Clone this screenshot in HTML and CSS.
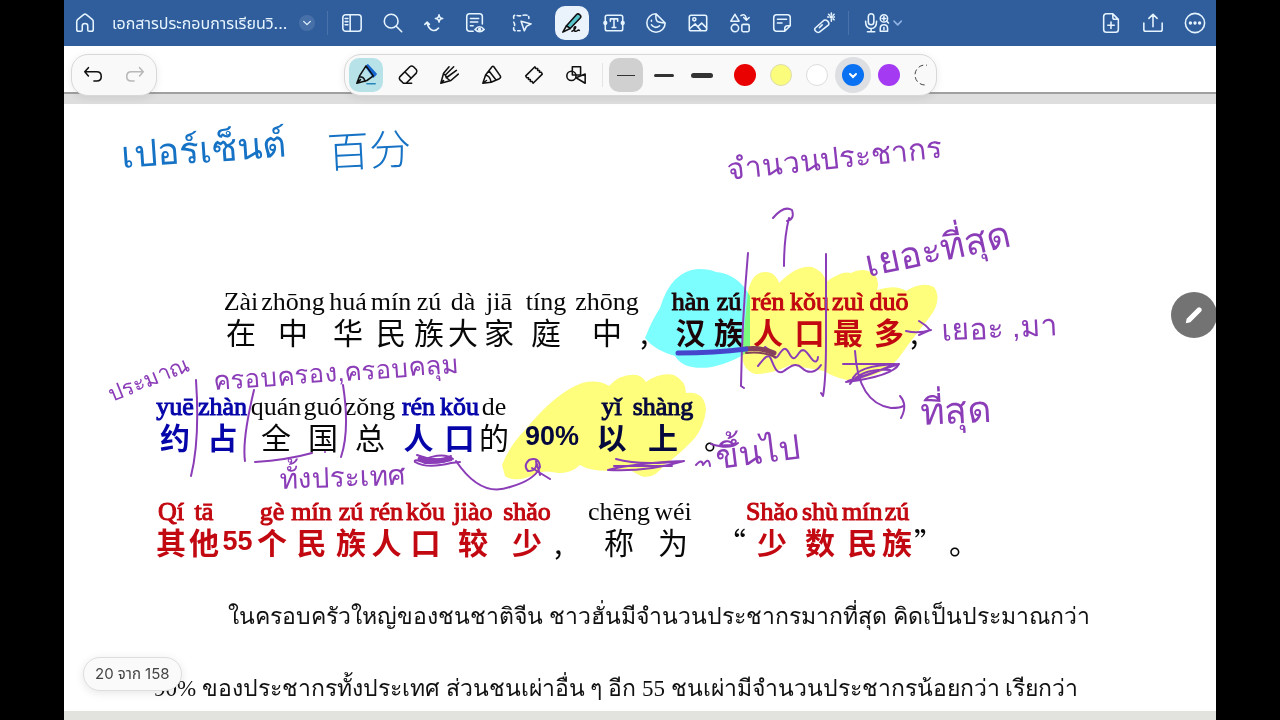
FILE: index.html
```html
<!DOCTYPE html>
<html lang="th">
<head>
<meta charset="utf-8">
<meta name="viewport" content="width=device-width, initial-scale=1">
<title>เอกสารประกอบการเรียน</title>
<link rel="stylesheet" href="styles.css">
</head>
<body>
<div class="app">
  <header class="topbar">
    <button class="tool home" aria-label="Home"><svg class="icon" viewBox="0 0 24 24"><path d="M3 10.5Q3 9 4.2 8L10.500 2.800Q12 1.800 13.500 2.800L19.800 8Q21 9 21 10.500V19Q21 21 19 21H16.500Q15 21 15 19.500V15Q15 12.500 12 12.500T9 15V19.500Q9 21 7.500 21H5Q3 21 3 19Z"/></svg></button>
    <h1 class="title">เอกสารประกอบการเรียนวิ...</h1>
    <button class="title-menu" aria-label="Document menu"><svg class="icon small" viewBox="0 0 24 24"><path d="M4 8l8 8 8-8"/></svg></button>
    <span class="divider"></span>
    <nav class="tools views">
      <button class="tool" aria-label="Sidebar"><svg class="icon" viewBox="0 0 24 24"><rect x="2" y="3" width="20" height="18" rx="3"/><path d="M10 3v18M4.500 7h3M4.500 10.500h3M4.500 14h3"/></svg></button>
      <button class="tool" aria-label="Search"><svg class="icon" viewBox="0 0 24 24"><circle cx="10" cy="10" r="7.500"/><path d="M15.500 15.500l6 6"/></svg></button>
      <button class="tool" aria-label="Assistant"><svg class="icon" viewBox="0 0 24 24"><path d="M2 13.500l2.500-2.500L7 13.500M4.500 12c2 9 9 10 12.500 5.500M17.500 3q.5 4 4 4-3.500 0-4 4-.5-4-4-4 3.500 0 4-4z"/></svg></button>
      <button class="tool" aria-label="Page view"><svg class="icon" viewBox="0 0 24 24"><path d="M10 21H6q-3 0-3-3V5q0-3 3-3h11q3 0 3 3v8M7 7h9M7 11h8M7 15h3"/><path d="M12 19q5-6 10 0-5 5-10 0z"/><circle cx="17" cy="19" r="1"/></svg></button>
    </nav>
    <button class="tool lasso" aria-label="Lasso"><svg class="icon" viewBox="0 0 24 24"><path d="M3 7Q2 3 6 3.500q3 1.500 7 0 7-1 6.500 3.500M3 11q2 3 0 6-1 4 4 3.500h3" stroke-dasharray="4 2.500"/><path d="M11 10l11 3-5 2.500-2.500 5z"/></svg></button>
    <nav class="tools inserts">
      <button class="tool active" aria-label="Pen"><svg class="icon pen" viewBox="0 0 24 24"><path class="aqua" d="M6 15L17 2.800q1.500-1.500 3.500.2t.500 3.500L10 18z"/><path d="M2 22l4-7L10 18zM12 21c3-1 5-5 3.500-5s-2 5 .500 5 2-2 4-1"/></svg></button>
      <button class="tool" aria-label="Text box"><svg class="icon" viewBox="0 0 24 24"><rect x="2.500" y="3.500" width="19" height="17" rx="2"/><path d="M8 10V7.500h8V10M12 7.500V17M10 17h4"/><circle class="solid" cx="2.500" cy="12" r="1.500"/><circle class="solid" cx="21.500" cy="12" r="1.500"/></svg></button>
      <button class="tool" aria-label="Sticker"><svg class="icon" viewBox="0 0 24 24"><path d="M12 2a10 10 0 1 0 10 10zM12 2q-1 8 3 9t7 1M7 14q4 5 9 1M7 9v1"/></svg></button>
      <button class="tool" aria-label="Image"><svg class="icon" viewBox="0 0 24 24"><rect x="2.500" y="3.500" width="19" height="17" rx="2"/><circle cx="8" cy="8" r="1.700"/><path d="M3 18l6-5 6 7M12 16l4-4 5 5"/></svg></button>
      <button class="tool" aria-label="Elements"><svg class="icon" viewBox="0 0 24 24"><path d="M6.500 2.500L11 10H2zM13 4q5-3 6 4M16 6l3 3 3-3"/><circle cx="6.500" cy="17.500" r="4"/><rect x="14" y="13.500" width="8" height="8" rx="1.500"/></svg></button>
      <button class="tool" aria-label="Sticky note"><svg class="icon" viewBox="0 0 24 24"><path d="M15 21H6q-3 0-3-3V6q0-3 3-3h12q3 0 3 3v9zM15 21v-3q0-3 3-3h3M7 8h10M7 12h5"/></svg></button>
      <button class="tool" aria-label="Laser pointer"><svg class="icon" viewBox="0 0 24 24"><path d="M2.500 17.500L12 9q2-1 4 1t1 4L7 22q-2 1-4-1t-.5-3.500zM7 17l3-3M20 1v2M20 8v2M16 5.500h1.500M22.500 5.500H24M17 2.500l1 1M22 7.500l1 1M22 3.500l1-1"/><circle class="solid" cx="20" cy="5.500" r="1"/></svg></button>
    </nav>
    <span class="divider"></span>
    <button class="record" aria-label="Record audio"><svg class="icon wide" viewBox="0 0 40 24"><rect x="4" y="2" width="6" height="12" rx="3"/><path d="M1 10q0 8 6 8t6-8M7 18v3M3 21.500h8"/><circle cx="21" cy="7" r="4"/><path d="M19 7h4M21 5v4M24 10l2 2M17 21v-3q0-4 4-4t4 4v3zM21 17v2"/><path class="faint" d="M32 10l4 4 4-4"/></svg></button>
    <nav class="tools actions">
      <button class="tool" aria-label="Add page"><svg class="icon" viewBox="0 0 24 24"><path d="M14 2H7Q4 2 4 5v14q0 3 3 3h10q3 0 3-3V8zM14 2v4q0 2 2 2h4M12 11v7M8.500 14.500h7"/></svg></button>
      <button class="tool" aria-label="Share"><svg class="icon" viewBox="0 0 24 24"><path d="M12 16V3M7.500 7L12 2.500 16.500 7M2 12v7q0 2 2 2h16q2 0 2-2v-7"/></svg></button>
      <button class="tool" aria-label="More"><svg class="icon" viewBox="0 0 24 24"><circle cx="12" cy="12" r="10.500"/><circle class="solid" cx="7" cy="12" r="1"/><circle class="solid" cx="12" cy="12" r="1"/><circle class="solid" cx="17" cy="12" r="1"/></svg></button>
    </nav>
  </header>

  <div class="penbar">
    <div class="pill history">
      <button class="tool" aria-label="Undo"><svg class="icon" viewBox="0 0 24 24"><path d="M7 4L3 8.500 7 13M3 8.500h13q5 0 5 5t-5 5h-3"/></svg></button>
      <button class="tool" aria-label="Redo" disabled><svg class="icon" viewBox="0 0 24 24"><path d="M17 4l4 4.500-4 4.500M21 8.500H8q-5 0-5 5t5 5h3"/></svg></button>
    </div>
    <div class="pill pens">
      <button class="tool chosen" aria-label="Fountain pen"><svg class="icon" viewBox="0 0 24 24"><path class="blue" d="M12 3l2-2 9 10-3 3z"/><path d="M2 21L5 13l7-11 8 11-7 5-11 3zM2 21l4-4M5 14q5 0 6 5"/><path class="blue-line" d="M13 21.500h9"/></svg></button>
      <button class="tool" aria-label="Eraser"><svg class="icon" viewBox="0 0 24 24"><path d="M3 14L14 3q2-1.500 4 0l3 3q1.500 2 0 4L10 21H7l-4-4q-1-1.500 0-3zM8.500 8.500l7 7M10 21h6"/></svg></button>
      <button class="tool" aria-label="Pencil"><svg class="icon" viewBox="0 0 24 24"><path d="M2 21l3-11 6-7M2 21l11-3 8-7M5 11l2 1 1 3 4 3M7 12l9-9M8 15l11-8M2 21l3-3"/></svg></button>
      <button class="tool" aria-label="Highlighter"><svg class="icon" viewBox="0 0 24 24"><path d="M2 21l3-9 7-9q1-1 2 0l7 10q1 2-1 3l-9 4zM5 12q5 1 6 8M9 8l7 9M2 21l4-3"/></svg></button>
      <button class="tool" aria-label="Tape"><svg class="icon" viewBox="0 0 24 24"><path d="M3 13L13 3l1 2 2 0 0 2 2 0 0 2 2 0 1 2-10 10-1-2-2 0 0-2-2 0 0-2-2 0z"/></svg></button>
      <button class="tool" aria-label="Shapes"><svg class="icon" viewBox="0 0 24 24"><rect x="8" y="3" width="9" height="9"/><circle cx="7" cy="13" r="5"/><path d="M12 15l10-4v10z"/></svg></button>
      <span class="divider dark"></span>
      <button class="width picked" aria-label="Thin"><span class="bar thin"></span></button>
      <button class="width" aria-label="Medium"><span class="bar medium"></span></button>
      <button class="width" aria-label="Thick"><span class="bar thick"></span></button>
      <div class="swatches">
        <button class="swatch" aria-label="Red"><span class="dot red"></span></button>
        <button class="swatch" aria-label="Yellow"><span class="dot yellow"></span></button>
        <button class="swatch" aria-label="White"><span class="dot white"></span></button>
        <button class="swatch current" aria-label="Blue"><span class="dot azure"><svg class="tick" viewBox="0 0 22 22"><path d="M8 10l3 3 3-3"/></svg></span></button>
        <button class="swatch" aria-label="Purple"><span class="dot purple"></span></button>
        <button class="swatch cut" aria-label="Add colour"><svg class="ring" viewBox="0 0 22 22"><circle cx="11" cy="11" r="10"/></svg></button>
      </div>
    </div>
  </div>

  <main class="paper">
    <svg class="layer" viewBox="64 104 1152 607" preserveAspectRatio="xMidYMin slice" aria-hidden="true">
      <path class="mark cyan" d="M645 338Q652 320 660 308Q671 271 698 269Q710 269 716 272Q738 274 750 296V350Q735 362 712 367Q684 371 675 356Q654 350 645 338Z"/>
      <path class="mark lemon" d="M748 292Q752 271 767 272Q776 273 779 283Q797 265 812 267Q824 271 826 282Q842 270 851 273Q864 266 875 275Q880 282 877 290Q896 284 906 291Q922 281 934 287Q943 300 929 318Q913 338 903 352Q887 378 847 380Q833 377 824 371L790 365Q773 374 755 374Q741 370 742 350Z"/>
      <path class="mark lemon" d="M502 465Q510 445 525 430Q555 393 582 383Q598 379 609 386Q621 373 637 375Q643 377 646 382Q660 372 674 375Q686 381 686 393Q705 391 706 410Q704 427 694 439Q678 456 664 465Q654 480 641 476Q633 472 629 469Q594 474 580 465Q570 474 558 473Q545 470 537 473Q517 484 505 476Z"/>
    </svg>

    <article class="lesson">
      <div class="line one">
        <span class="word"><i>Zài</i><b>在</b></span><span class="word"><i>zhōng</i><b>中</b></span><span class="word"><i>huá</i><b>华</b></span><span class="word"><i>mín</i><b>民</b></span><span class="word"><i>zú</i><b>族</b></span><span class="word"><i>dà</i><b>大</b></span><span class="word"><i>jiā</i><b>家</b></span><span class="word"><i>tíng</i><b>庭</b></span><span class="word"><i>zhōng</i><b>中</b></span><span class="word comma"><i></i><b>,</b></span><span class="word strong dark"><i>hàn</i><b>汉</b></span><span class="word strong dark"><i>zú</i><b>族</b></span><span class="word strong crimson"><i>rén</i><b>人</b></span><span class="word strong crimson"><i>kǒu</i><b>口</b></span><span class="word strong crimson"><i>zuì</i><b>最</b></span><span class="word strong crimson"><i>duō</i><b>多</b></span><span class="word comma"><i></i><b>,</b></span>
      </div>
      <div class="line two">
        <span class="word strong navy"><i>yuē</i><b>约</b></span><span class="word strong navy"><i>zhàn</i><b>占</b></span><span class="word"><i>quán</i><b>全</b></span><span class="word"><i>guó</i><b>国</b></span><span class="word"><i>zǒng</i><b>总</b></span><span class="word strong navy"><i>rén</i><b>人</b></span><span class="word strong navy"><i>kǒu</i><b>口</b></span><span class="word"><i>de</i><b>的</b></span><span class="word strong ink"><i></i><b class="figure">90%</b></span><span class="word strong ink"><i>yǐ</i><b>以</b></span><span class="word strong ink"><i>shàng</i><b>上</b></span><span class="word"><i></i><b>。</b></span>
      </div>
      <div class="line three">
        <span class="word strong crimson"><i>Qí</i><b>其</b></span><span class="word strong crimson"><i>tā</i><b>他</b></span><span class="word strong crimson"><i></i><b class="figure">55</b></span><span class="word strong crimson"><i>gè</i><b>个</b></span><span class="word strong crimson"><i>mín</i><b>民</b></span><span class="word strong crimson"><i>zú</i><b>族</b></span><span class="word strong crimson"><i>rén</i><b>人</b></span><span class="word strong crimson"><i>kǒu</i><b>口</b></span><span class="word strong crimson"><i>jiào</i><b>较</b></span><span class="word strong crimson"><i>shǎo</i><b>少</b></span><span class="word comma"><i></i><b>,</b></span><span class="word"><i>chēng</i><b>称</b></span><span class="word"><i>wéi</i><b>为</b></span><span class="word quote"><i></i><b>“</b></span><span class="word strong crimson"><i>Shǎo</i><b>少</b></span><span class="word strong crimson"><i>shù</i><b>数</b></span><span class="word strong crimson"><i>mín</i><b>民</b></span><span class="word strong crimson"><i>zú</i><b>族</b></span><span class="word"><i></i><b>”</b></span><span class="word"><i></i><b>。</b></span>
      </div>
      <p class="thai">ในครอบครัวใหญ่ของชนชาติจีน ชาวฮั่นมีจำนวนประชากรมากที่สุด คิดเป็นประมาณกว่า<br>90% ของประชากรทั้งประเทศ ส่วนชนเผ่าอื่น ๆ อีก 55 ชนเผ่ามีจำนวนประชากรน้อยกว่า เรียกว่า</p>
    </article>

    <svg class="layer" viewBox="64 104 1152 607" preserveAspectRatio="xMidYMin slice">
      <g class="note blue-ink">
        <text class="n37" transform="translate(122 168) rotate(-4)">เปอร์เซ็นต์</text>
        <text class="n42" transform="translate(328 168) rotate(-3)">百分</text>
      </g>
      <g class="note">
        <text class="n30" transform="translate(728 180) rotate(-6)">จำนวนประชากร</text>
        <text class="n37" transform="translate(868 277) rotate(-12)">เยอะที่สุด</text>
        <text class="n22" transform="translate(112 402) rotate(-22)">ประมาณ</text>
        <text class="n26" transform="translate(214 390) rotate(-4)">ครอบครอง,ครอบคลุม</text>
        <text class="n28" transform="translate(280 489) rotate(-2)">ทั้งประเทศ</text>
        <text class="n34" transform="translate(717 469) rotate(-7)">ขึ้นไป</text>
        <text class="n37" transform="translate(921 425) rotate(-3)">ที่สุด</text>
        <text class="n30" transform="translate(942 341) rotate(-3)">เยอะ ,มา</text>
      </g>
      <g class="stroke">
        <path d="M784 266Q784 238 789 218M773 218Q784 205 792 210Q795 219 787 221"/>
        <path d="M748 253Q742 320 741 386L744 388M826 254V340Q826 380 823 396L821 393"/>
        <path d="M196 380Q200 440 191 476M254 390Q242 440 245 461M343 385Q350 430 341 457M255 462Q287 460 312 453M325 452V452"/>
        <path d="M765 347C771 350 774 362 778 356S785 345 789 353S795 359 799 353S806 351 811 358S818 360 818 357"/>
        <path d="M758 366C763 360 768 352 771 359S777 376 784 371S796 362 802 368S816 373 821 365"/>
        <path d="M855 351Q858 403 891 408Q901 408 903 406M900 396Q908 405 901 418M843 364H895Q870 375 846 382Q893 376 899 364Q855 365 852 381M850 384Q861 368 890 370M848 381L896 365"/>
        <path d="M906 331Q918 334 931 330M919 321Q926 325 930 330L919 335"/>
        <path d="M417 455Q438 463 451 456Q450 464 425 463Q413 458 415 462Q427 469 451 463L460 462M420 461Q443 451 453 459"/>
        <path d="M456 461Q481 498 510 487Q535 480 540 467Q539 456 529 460Q523 466 528 471Q538 471 536 461L540 475M532 468L550 479"/>
        <path d="M616 459Q640 466 684 461Q647 472 608 470Q635 463 684 461M614 466H672"/>
        <path d="M696 465Q702 458 703 465Q709 456 710 466M711 444Q730 450 738 443"/>
        <path class="heavy" d="M420 459Q438 463 450 459"/>
        <path class="heavy maroon" d="M746 349Q760 347 774 353"/>
        <path class="heavy indigo" d="M678 353Q715 353 746 349"/>
        <path class="maroon" d="M746 353Q762 351 775 357"/>
      </g>
    </svg>

    <div class="page-chip">20 จาก 158</div>
    <button class="float-pen" aria-label="Edit"><svg class="icon" viewBox="0 0 24 24"><path d="M3 21l1-5L16 4q2-1 3 0l1 1q1 1 0 3L8 20z"/></svg></button>
  </main>
  <div class="page-edge"></div>
</div>
</body>
</html>
```
FILE: styles.css
```css
* { box-sizing: border-box; }

body {
  margin: 0;
  background: #000;
  font-family: Inter, "Noto Sans", "Noto Sans Thai", "Liberation Sans", sans-serif;
}

button {
  display: flex;
  align-items: center;
  justify-content: center;
  flex: none;
  margin: 0;
  padding: 0;
  border: 0;
  background: none;
  color: inherit;
  font: inherit;
}

.app {
  display: flex;
  flex-direction: column;
  height: 100vh;
  margin: 0 5%;
  overflow: hidden;
  background: #fff;
}

.topbar {
  display: flex;
  align-items: center;
  flex: none;
  height: 46px;
  background: #305e9c;
  color: #e6f4ff;
}

.icon {
  width: 22px;
  height: 22px;
  fill: none;
  stroke: currentColor;
  stroke-width: 1.7;
  stroke-linecap: round;
  stroke-linejoin: round;
}
.icon .solid { fill: currentColor; }
.icon .faint { stroke: #8fb4e4; }
.icon.small { width: 10px; height: 10px; stroke-width: 3; }
.icon.wide { width: 40px; height: 22px; }

.tool { width: 42px; height: 34px; }
.tools { display: flex; }
.title {
  width: 180px;
  margin: 0 0 0 6px;
  overflow: hidden;
  font-size: 16px;
  font-weight: 400;
  line-height: 28px;
  white-space: nowrap;
}
.title-menu {
  width: 16px;
  height: 16px;
  margin-left: 7px;
  border-radius: 50%;
  background: #4870a8;
}
.divider { flex: none; width: 1px; height: 24px; margin: 0 3px 0 12px; background: #4a72aa; }
.divider.dark { margin: 0 6px 0 5px; background: #e4e4e4; }
.views .tool { width: 41px; }
.lasso { margin-left: 6px; }
.inserts { margin-left: 8px; }
.inserts + .divider { margin: 0 14px 0 3px; }
.tool.active { width: 34px; margin: 0 4px; border-radius: 10px; background: #eaf3fc; color: #111; }
.aqua { fill: #58c4cc; }
.actions { margin-left: auto; }

.penbar {
  position: relative;
  z-index: 2;
  display: grid;
  grid-template-columns: 1fr auto 1fr;
  align-items: start;
  flex: none;
  height: 48px;
  padding: 8px 7px 0;
  border-bottom: 2px solid #a0a0a0;
}
.pill {
  display: flex;
  align-items: center;
  justify-self: start;
  height: 42px;
  border: 1px solid #d8d8d8;
  border-radius: 17px;
  background: #f9f9f9;
  box-shadow: 0 2px 8px #00000014;
  color: #111;
}
.history { width: 86px; }
.history .tool:disabled { color: #b8b8b8; }
.pens .tool.chosen { width: 34px; margin: 0 4px; border-radius: 10px; background: #b6e2e8; }
.icon .blue { fill: #1767d2; stroke: #1767d2; }
.icon .blue-line { stroke: #2685bd; }
.width { width: 34px; height: 34px; margin-right: 4px; border-radius: 10px; }
.width.picked { background: #d0d0d0; }
.bar { width: 18px; height: 1px; background: #333; }
.bar.medium { width: 20px; height: 3px; border-radius: 2px; }
.bar.thick { width: 22px; height: 5px; border-radius: 3px; }
.swatches { display: flex; margin-left: 4px; }
.swatch { width: 36px; height: 36px; border-radius: 50%; }
.swatch.current { background: #dedfe2; }
.dot { width: 22px; height: 22px; border-radius: 50%; }
.red { background: #e90000; }
.yellow { background: #fbfb7c; border: 1px solid #ddddae; }
.white { background: #fff; border: 1px solid #ddd; }
.azure { background: #0a71f2; }
.purple { background: #a43bf3; }
.tick { display: block; width: 22px; fill: none; stroke: #fff; stroke-width: 2; stroke-linecap: round; }
.swatch.cut { justify-content: flex-start; width: 20px; margin-right: 9px; padding-left: 7px; border-radius: 0; overflow: hidden; }
.ring { flex: none; width: 22px; fill: none; stroke: #444; stroke-width: 1; stroke-dasharray: 5 3; }

.paper {
  position: relative;
  flex: 1;
  min-height: 0;
  overflow: hidden;
  border-top: 10px solid #dedede;
}
.page-edge { flex: none; height: 9px; background: #e2e3df; }

.layer { position: absolute; inset: 0; width: 100%; height: 100%; }
.mark.cyan { fill: #7cfefe; }
.mark.lemon { fill: #fefd7c; }
.mark { mix-blend-mode: multiply; }

.lesson { position: relative; padding: 184px 0 0 90px; }
.line { display: grid; margin-bottom: 47px; color: #080808; }
.one { padding-left: 68px; grid-template-columns: 38px 66px 44px 42px 34px 34px 38px 56px 66px 29px 43px 34px 44px 38px 40px 42px 16px; }
.two { grid-template-columns: 42px 53px 54px 40px 54px 43px 37px 34px 82px 37px 66px 46px; }
.three { grid-template-columns: 34px 32px 35px 34px 45px 34px 37px 41px 54px 54px 33px 64px 44px 51px 52px 44px 38px 34px 24px 52px; }
.word { display: grid; grid-template-rows: 28px 30px; justify-items: center; min-width: 0; white-space: nowrap; }
.word i { font: normal 400 26px/28px "Liberation Serif", serif; }
.word b { font: 400 30px/30px "Noto Sans CJK SC", sans-serif; }
.strong i { -webkit-text-stroke: 1px currentColor; }
.strong b { font-weight: 700; }
.word .figure { font: 700 27px/30px "Liberation Sans", sans-serif; }
.crimson { color: #c20810; }
.navy { color: #0505aa; }
.ink { color: #05083c; }
.dark { color: #1c0508; }
.quote { justify-items: end; }
.comma { justify-items: start; }
.thai {
  margin: -22px 0 0;
  font: 400 23px/72px "Liberation Serif", serif;
  text-indent: 74px;
  white-space: nowrap;
  color: #111;
}

.note { fill: #8b3db8; font-family: "Liberation Sans", "Noto Sans CJK SC", sans-serif; font-weight: 300; }
.blue-ink { fill: #1672c4; }
.n22 { font-size: 22px; }
.n26 { font-size: 26px; }
.n28 { font-size: 28px; }
.n30 { font-size: 30px; }
.n34 { font-size: 34px; }
.n37 { font-size: 37px; }
.n42 { font-size: 42px; }
.stroke { fill: none; stroke: #8b3db8; stroke-width: 2; stroke-linecap: round; stroke-linejoin: round; }
.heavy { stroke-width: 5; }
.maroon { stroke: #85405c; }
.indigo { stroke: #4646cc; }

.page-chip {
  position: absolute;
  left: 19px;
  bottom: 20px;
  padding: 0 11px;
  border: 1px solid #dedede;
  border-radius: 17px;
  background: #fafafa;
  box-shadow: 0 2px 10px #0000001a;
  color: #444;
  font-size: 15px;
  line-height: 32px;
}
.float-pen {
  position: absolute;
  top: 188px;
  right: -1px;
  width: 46px;
  height: 46px;
  border-radius: 50%;
  background: #737374;
}
.float-pen path { fill: #fff; stroke: none; }
```
